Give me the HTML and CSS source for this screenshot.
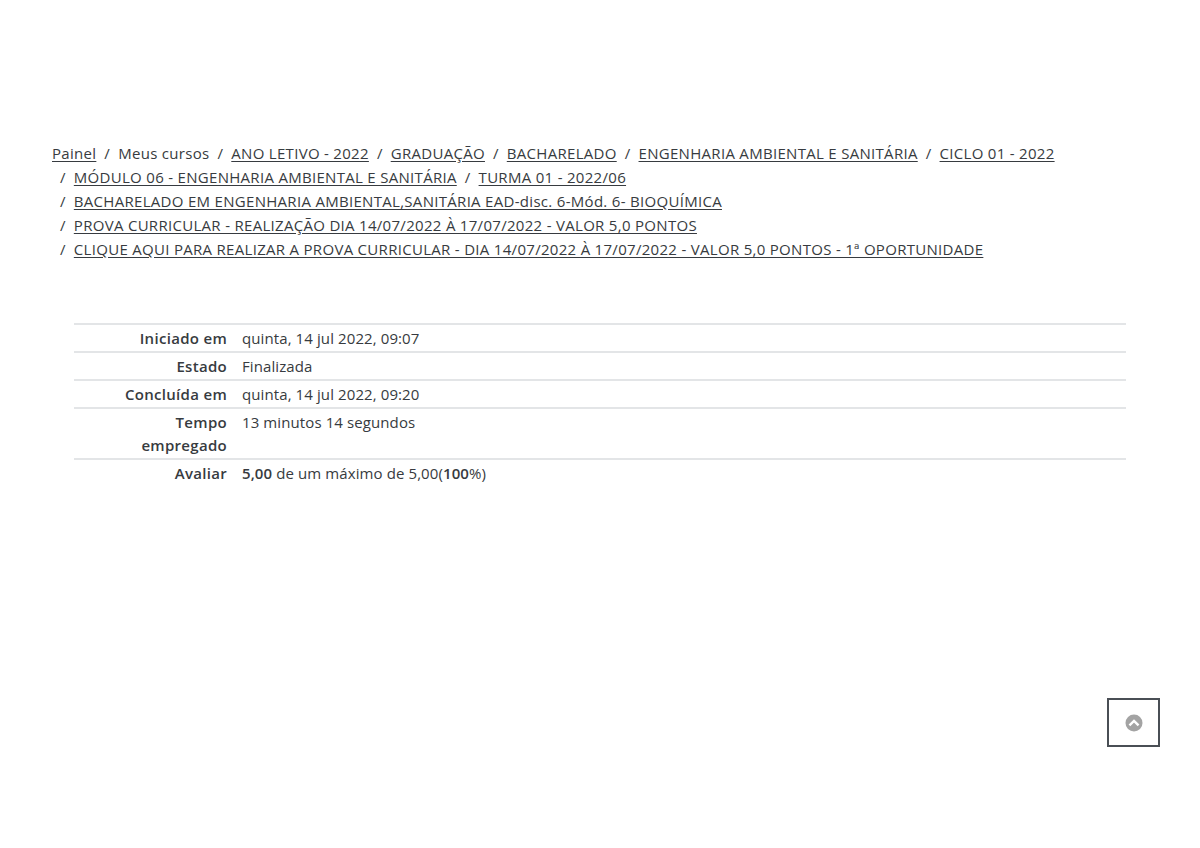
FILE: index.html
```html
<!DOCTYPE html>
<html lang="pt">
<head>
<meta charset="utf-8">
<title>Revisão da tentativa</title>
<link rel="stylesheet" href="styles.css">
</head>
<body>
<div class="page">
  <nav class="crumbs">
    <ol>
      <li class="first"><a href="#">Painel</a></li>
      <li><span>Meus cursos</span></li>
      <li><a href="#">ANO LETIVO - 2022</a></li>
      <li><a href="#">GRADUAÇÃO</a></li>
      <li><a href="#">BACHARELADO</a></li>
      <li><a href="#">ENGENHARIA AMBIENTAL E SANITÁRIA</a></li>
      <li><a href="#">CICLO 01 - 2022</a></li>
      <li class="break"></li>
      <li><a href="#">MÓDULO 06 - ENGENHARIA AMBIENTAL E SANITÁRIA</a></li>
      <li><a href="#">TURMA 01 - 2022/06</a></li>
      <li class="break"></li>
      <li><a href="#">BACHARELADO EM ENGENHARIA AMBIENTAL,SANITÁRIA EAD-disc. 6-Mód. 6- BIOQUÍMICA</a></li>
      <li class="break"></li>
      <li><a href="#">PROVA CURRICULAR - REALIZAÇÃO DIA 14/07/2022 À 17/07/2022 - VALOR 5,0 PONTOS</a></li>
      <li class="break"></li>
      <li><a href="#">CLIQUE AQUI PARA REALIZAR A PROVA CURRICULAR - DIA 14/07/2022 À 17/07/2022 - VALOR 5,0 PONTOS - 1ª OPORTUNIDADE</a></li>
    </ol>
  </nav>

  <table class="summary">
    <tbody>
      <tr><th>Iniciado em</th><td>quinta, 14 jul 2022, 09:07</td></tr>
      <tr><th>Estado</th><td>Finalizada</td></tr>
      <tr><th>Concluída em</th><td>quinta, 14 jul 2022, 09:20</td></tr>
      <tr><th>Tempo empregado</th><td>13 minutos 14 segundos</td></tr>
      <tr><th>Avaliar</th><td><b>5,00</b> de um máximo de 5,00(<b>100</b>%)</td></tr>
    </tbody>
  </table>
</div>

<a class="to-top" href="#" aria-label="Voltar ao topo">
  <svg width="18" height="18" viewBox="0 0 18 18">
    <circle cx="9" cy="9" r="8.5" fill="#a3a3a3"/>
    <path d="M5.3 10.6 L9 6.9 L12.7 10.6" fill="none" stroke="#fff" stroke-width="2.4" stroke-linecap="square"/>
  </svg>
</a>
</body>
</html>
```

FILE: styles.css
```css
html, body {
  margin: 0;
  padding: 0;
  background: #fff;
}
body {
  font-family: "Open Sans", "Noto Sans", "DejaVu Sans", sans-serif;
  font-size: 15px;
  color: #373b40;
}
.page {
  padding: 141px 0 0 52px;
  width: 1100px;
}
.crumbs ol {
  list-style: none;
  margin: 0;
  padding: 0;
  display: flex;
  flex-wrap: wrap;
  line-height: 24px;
  letter-spacing: 0.3px;
}
.crumbs li {
  white-space: nowrap;
}
.crumbs li::before {
  content: "/";
  padding: 0 8px 0 8px;
  color: #373b40;
}
.crumbs li.first::before,
.crumbs li.break::before {
  content: none;
}
.crumbs li.break {
  flex-basis: 100%;
  height: 0;
}
.crumbs a {
  color: #373b40;
  text-decoration: underline;
  text-underline-offset: 2px;
}
.summary {
  margin: 62px 0 0 22px;
  width: 1052px;
  border-collapse: collapse;
}
.summary th,
.summary td {
  border-top: 2px solid #e3e5e7;
  padding: 2px 0 1px 0;
  line-height: 23px;
  vertical-align: top;
  font-size: 15px;
}
.summary th {
  width: 108px;
  text-align: right;
  font-weight: 600;
  padding-left: 45px;
  padding-right: 7px;
  letter-spacing: 0.3px;
}
.summary td {
  padding-left: 8px;
  letter-spacing: 0.1px;
}
.summary b {
  font-weight: 600;
}
.to-top {
  position: fixed;
  left: 1107px;
  top: 698px;
  width: 49px;
  height: 45px;
  border: 2px solid #4a4f55;
  display: flex;
  align-items: center;
  justify-content: center;
  background: #fff;
}
```
